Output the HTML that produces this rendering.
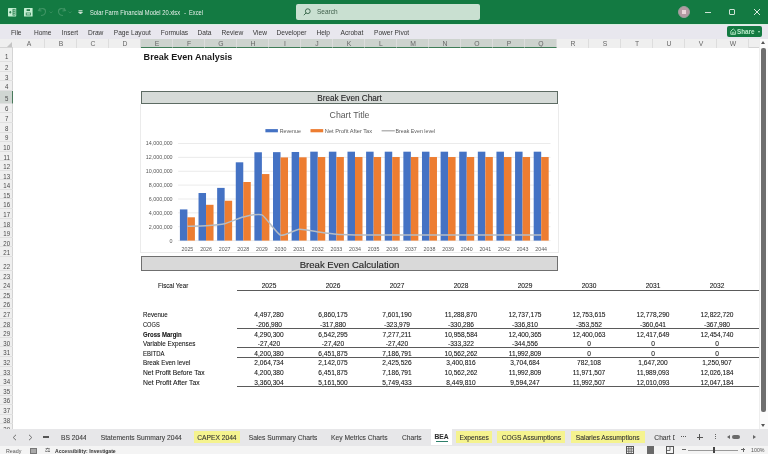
<!DOCTYPE html><html><head><meta charset="utf-8"><style>
*{margin:0;padding:0;box-sizing:border-box}
html,body{width:768px;height:454px;overflow:hidden;background:#fff;font-family:"Liberation Sans", sans-serif;-webkit-font-smoothing:antialiased}
#w{position:absolute;left:0;top:0;width:768px;height:454px;will-change:transform}
.a{position:absolute;white-space:nowrap}
.t{-webkit-text-stroke:0.08px #222}
</style></head><body><div id="w">

<div class="a" style="left:0;top:0;width:768px;height:23.5px;background:#137a42"></div>
<svg class="a" style="left:8px;top:7.5px" width="9" height="9" viewBox="0 0 9 9">
<rect x="0" y="0" width="8.2" height="8.4" rx="0.6" fill="#c4efd2"/>
<rect x="4.6" y="0.9" width="2.8" height="6.6" fill="#1f7a47"/>
<rect x="5.4" y="1.6" width="1.4" height="1.2" fill="#c4efd2"/><rect x="5.4" y="3.6" width="1.4" height="1.2" fill="#c4efd2"/><rect x="5.4" y="5.6" width="1.4" height="1.2" fill="#c4efd2"/>
<ellipse cx="2.3" cy="4.2" rx="0.9" ry="1.3" fill="#2a7d4e"/>
</svg>
<svg class="a" style="left:24px;top:7.5px" width="9" height="9" viewBox="0 0 9 9">
<rect x="0" y="0" width="8.6" height="8.4" rx="0.5" fill="#c4efd2"/>
<rect x="2.6" y="1.2" width="3.4" height="1.8" fill="#2a7d4e"/>
<rect x="1.8" y="4.6" width="5" height="2.8" fill="#2a7d4e"/>
<rect x="2.6" y="5.3" width="3.4" height="1.3" fill="#c4efd2"/>
</svg>
<svg class="a" style="left:37px;top:6px" width="50" height="11" viewBox="0 0 50 11">
<path d="M3 2 L1.5 4.5 L4.5 5 M1.8 4.5 C4 1.5 9 2 8.5 6 C8 8.5 5.5 9.5 4 9.5" fill="none" stroke="#3f9464" stroke-width="1.1"/>
<path d="M12.5 5.5 l1.5 1.5 l1.5 -1.5" fill="none" stroke="#3a8f5f" stroke-width="0.8"/>
<path d="M27 2 L28.5 4.5 L25.5 5 M28.2 4.5 C26 1.5 21 2 21.5 6 C22 8.5 24.5 9.5 26 9.5" fill="none" stroke="#3f9464" stroke-width="1.1"/>
<path d="M31.5 5.5 l1.5 1.5 l1.5 -1.5" fill="none" stroke="#3a8f5f" stroke-width="0.8"/>
<path d="M41.5 4.5 h4 M41.5 6 l2 2 l2 -2 z" fill="#cfe3d6" stroke="#cfe3d6" stroke-width="0.8"/>
</svg>
<div class="a" style="left:90px;top:6.8px;font-size:6.5px;line-height:11px;color:#e6f0ea;transform:scaleX(0.888);transform-origin:left">Solar Farm Financial Model 20.xlsx</div>
<div class="a" style="left:184px;top:6.8px;font-size:6.5px;line-height:11px;color:#e6f0ea">-</div>
<div class="a" style="left:188.5px;top:6.8px;font-size:6.5px;line-height:11px;color:#e6f0ea;transform:scaleX(0.88);transform-origin:left">Excel</div>
<div class="a" style="left:296px;top:4px;width:184px;height:16px;background:#c9e0d1;border-radius:2px"></div>
<svg class="a" style="left:303px;top:8px" width="8" height="8" viewBox="0 0 8 8"><circle cx="4.8" cy="3.2" r="2.4" fill="none" stroke="#2f5e42" stroke-width="0.9"/><line x1="3.1" y1="4.9" x2="0.8" y2="7.2" stroke="#2f5e42" stroke-width="0.9"/></svg>
<div class="a" style="left:317px;top:6px;font-size:6.5px;line-height:12px;color:#40604c">Search</div>
<div class="a" style="left:678px;top:6px;width:12px;height:12px;border-radius:50%;background:#b39aa2;border:1.5px solid #9a9f9c"></div>
<div class="a" style="left:682px;top:10px;width:4px;height:4px;background:#e9d6da"></div>
<div class="a" style="left:705px;top:11.5px;width:6px;height:1px;background:#cfe3d6"></div>
<div class="a" style="left:729px;top:9px;width:6px;height:6px;border:1px solid #cfe3d6;border-radius:1px"></div>
<svg class="a" style="left:753px;top:8px" width="8" height="8" viewBox="0 0 8 8"><path d="M1 1 L7 7 M7 1 L1 7" stroke="#d9eadf" stroke-width="1"/></svg>
<div class="a" style="left:0;top:23.5px;width:768px;height:15.5px;background:#e8e7ee"></div>
<div class="a" style="left:0;top:23.5px;width:768px;height:1.3px;background:#d9efe1"></div>
<div class="a" style="left:10.9px;top:26.6px;font-size:6.6px;line-height:12px;color:#383838">File</div>
<div class="a" style="left:33.9px;top:26.6px;font-size:6.6px;line-height:12px;color:#383838">Home</div>
<div class="a" style="left:61.7px;top:26.6px;font-size:6.6px;line-height:12px;color:#383838">Insert</div>
<div class="a" style="left:88px;top:26.6px;font-size:6.6px;line-height:12px;color:#383838">Draw</div>
<div class="a" style="left:113.8px;top:26.6px;font-size:6.6px;line-height:12px;color:#383838">Page Layout</div>
<div class="a" style="left:160.7px;top:26.6px;font-size:6.6px;line-height:12px;color:#383838">Formulas</div>
<div class="a" style="left:197.6px;top:26.6px;font-size:6.6px;line-height:12px;color:#383838">Data</div>
<div class="a" style="left:221.6px;top:26.6px;font-size:6.6px;line-height:12px;color:#383838">Review</div>
<div class="a" style="left:252.8px;top:26.6px;font-size:6.6px;line-height:12px;color:#383838">View</div>
<div class="a" style="left:276.5px;top:26.6px;font-size:6.6px;line-height:12px;color:#383838">Developer</div>
<div class="a" style="left:316.4px;top:26.6px;font-size:6.6px;line-height:12px;color:#383838">Help</div>
<div class="a" style="left:340.5px;top:26.6px;font-size:6.6px;line-height:12px;color:#383838">Acrobat</div>
<div class="a" style="left:374px;top:26.6px;font-size:6.6px;line-height:12px;color:#383838">Power Pivot</div>
<div class="a" style="left:727px;top:25.5px;width:35px;height:11.5px;background:#137a42;border-radius:2px"></div>
<svg class="a" style="left:729.5px;top:27.8px" width="7" height="7" viewBox="0 0 7 7"><path d="M0.8 3.2 L3.2 0.9 L5.6 3.2 V6.3 H0.8 Z" fill="none" stroke="#b5e6c5" stroke-width="0.9"/><path d="M2.4 6.3 V4.2 H4 V6.3" fill="none" stroke="#b5e6c5" stroke-width="0.7"/></svg>
<div class="a" style="left:737px;top:25.5px;font-size:6.3px;line-height:12px;color:#bdeccd;font-weight:bold">Share</div>
<div class="a" style="left:758px;top:30.5px;width:0;height:0;border-left:1.5px solid transparent;border-right:1.5px solid transparent;border-top:2px solid #b5e6c5"></div>
<div class="a" style="left:0;top:39px;width:768px;height:9.4px;background:#efefef;border-bottom:1px solid #d4d4d4"></div>
<div class="a" style="left:13px;top:39px;width:32px;height:9.4px;background:#efefef;border-right:1px solid #dddddd;"></div>
<div class="a" style="left:13px;top:39px;width:32px;height:9.4px;text-align:center;font-size:6.8px;line-height:9.4px;color:#666">A</div>
<div class="a" style="left:45px;top:39px;width:32px;height:9.4px;background:#efefef;border-right:1px solid #dddddd;"></div>
<div class="a" style="left:45px;top:39px;width:32px;height:9.4px;text-align:center;font-size:6.8px;line-height:9.4px;color:#666">B</div>
<div class="a" style="left:77px;top:39px;width:32px;height:9.4px;background:#efefef;border-right:1px solid #dddddd;"></div>
<div class="a" style="left:77px;top:39px;width:32px;height:9.4px;text-align:center;font-size:6.8px;line-height:9.4px;color:#666">C</div>
<div class="a" style="left:109px;top:39px;width:32px;height:9.4px;background:#efefef;border-right:1px solid #dddddd;"></div>
<div class="a" style="left:109px;top:39px;width:32px;height:9.4px;text-align:center;font-size:6.8px;line-height:9.4px;color:#666">D</div>
<div class="a" style="left:141px;top:39px;width:32px;height:9.4px;background:#cdd3ce;border-right:1px solid #dddddd;border-bottom:1px solid #3f7d57;"></div>
<div class="a" style="left:141px;top:39px;width:32px;height:9.4px;text-align:center;font-size:6.8px;line-height:9.4px;color:#666">E</div>
<div class="a" style="left:173px;top:39px;width:32px;height:9.4px;background:#cdd3ce;border-right:1px solid #dddddd;border-bottom:1px solid #3f7d57;"></div>
<div class="a" style="left:173px;top:39px;width:32px;height:9.4px;text-align:center;font-size:6.8px;line-height:9.4px;color:#666">F</div>
<div class="a" style="left:205px;top:39px;width:32px;height:9.4px;background:#cdd3ce;border-right:1px solid #dddddd;border-bottom:1px solid #3f7d57;"></div>
<div class="a" style="left:205px;top:39px;width:32px;height:9.4px;text-align:center;font-size:6.8px;line-height:9.4px;color:#666">G</div>
<div class="a" style="left:237px;top:39px;width:32px;height:9.4px;background:#cdd3ce;border-right:1px solid #dddddd;border-bottom:1px solid #3f7d57;"></div>
<div class="a" style="left:237px;top:39px;width:32px;height:9.4px;text-align:center;font-size:6.8px;line-height:9.4px;color:#666">H</div>
<div class="a" style="left:269px;top:39px;width:32px;height:9.4px;background:#cdd3ce;border-right:1px solid #dddddd;border-bottom:1px solid #3f7d57;"></div>
<div class="a" style="left:269px;top:39px;width:32px;height:9.4px;text-align:center;font-size:6.8px;line-height:9.4px;color:#666">I</div>
<div class="a" style="left:301px;top:39px;width:32px;height:9.4px;background:#cdd3ce;border-right:1px solid #dddddd;border-bottom:1px solid #3f7d57;"></div>
<div class="a" style="left:301px;top:39px;width:32px;height:9.4px;text-align:center;font-size:6.8px;line-height:9.4px;color:#666">J</div>
<div class="a" style="left:333px;top:39px;width:32px;height:9.4px;background:#cdd3ce;border-right:1px solid #dddddd;border-bottom:1px solid #3f7d57;"></div>
<div class="a" style="left:333px;top:39px;width:32px;height:9.4px;text-align:center;font-size:6.8px;line-height:9.4px;color:#666">K</div>
<div class="a" style="left:365px;top:39px;width:32px;height:9.4px;background:#cdd3ce;border-right:1px solid #dddddd;border-bottom:1px solid #3f7d57;"></div>
<div class="a" style="left:365px;top:39px;width:32px;height:9.4px;text-align:center;font-size:6.8px;line-height:9.4px;color:#666">L</div>
<div class="a" style="left:397px;top:39px;width:32px;height:9.4px;background:#cdd3ce;border-right:1px solid #dddddd;border-bottom:1px solid #3f7d57;"></div>
<div class="a" style="left:397px;top:39px;width:32px;height:9.4px;text-align:center;font-size:6.8px;line-height:9.4px;color:#666">M</div>
<div class="a" style="left:429px;top:39px;width:32px;height:9.4px;background:#cdd3ce;border-right:1px solid #dddddd;border-bottom:1px solid #3f7d57;"></div>
<div class="a" style="left:429px;top:39px;width:32px;height:9.4px;text-align:center;font-size:6.8px;line-height:9.4px;color:#666">N</div>
<div class="a" style="left:461px;top:39px;width:32px;height:9.4px;background:#cdd3ce;border-right:1px solid #dddddd;border-bottom:1px solid #3f7d57;"></div>
<div class="a" style="left:461px;top:39px;width:32px;height:9.4px;text-align:center;font-size:6.8px;line-height:9.4px;color:#666">O</div>
<div class="a" style="left:493px;top:39px;width:32px;height:9.4px;background:#cdd3ce;border-right:1px solid #dddddd;border-bottom:1px solid #3f7d57;"></div>
<div class="a" style="left:493px;top:39px;width:32px;height:9.4px;text-align:center;font-size:6.8px;line-height:9.4px;color:#666">P</div>
<div class="a" style="left:525px;top:39px;width:32px;height:9.4px;background:#cdd3ce;border-right:1px solid #dddddd;border-bottom:1px solid #3f7d57;"></div>
<div class="a" style="left:525px;top:39px;width:32px;height:9.4px;text-align:center;font-size:6.8px;line-height:9.4px;color:#666">Q</div>
<div class="a" style="left:557px;top:39px;width:32px;height:9.4px;background:#efefef;border-right:1px solid #dddddd;"></div>
<div class="a" style="left:557px;top:39px;width:32px;height:9.4px;text-align:center;font-size:6.8px;line-height:9.4px;color:#666">R</div>
<div class="a" style="left:589px;top:39px;width:32px;height:9.4px;background:#efefef;border-right:1px solid #dddddd;"></div>
<div class="a" style="left:589px;top:39px;width:32px;height:9.4px;text-align:center;font-size:6.8px;line-height:9.4px;color:#666">S</div>
<div class="a" style="left:621px;top:39px;width:32px;height:9.4px;background:#efefef;border-right:1px solid #dddddd;"></div>
<div class="a" style="left:621px;top:39px;width:32px;height:9.4px;text-align:center;font-size:6.8px;line-height:9.4px;color:#666">T</div>
<div class="a" style="left:653px;top:39px;width:32px;height:9.4px;background:#efefef;border-right:1px solid #dddddd;"></div>
<div class="a" style="left:653px;top:39px;width:32px;height:9.4px;text-align:center;font-size:6.8px;line-height:9.4px;color:#666">U</div>
<div class="a" style="left:685px;top:39px;width:32px;height:9.4px;background:#efefef;border-right:1px solid #dddddd;"></div>
<div class="a" style="left:685px;top:39px;width:32px;height:9.4px;text-align:center;font-size:6.8px;line-height:9.4px;color:#666">V</div>
<div class="a" style="left:717px;top:39px;width:32px;height:9.4px;background:#efefef;border-right:1px solid #dddddd;"></div>
<div class="a" style="left:717px;top:39px;width:32px;height:9.4px;text-align:center;font-size:6.8px;line-height:9.4px;color:#666">W</div>
<div class="a" style="left:7px;top:41.5px;width:0;height:0;border-left:5px solid transparent;border-bottom:5px solid #c4c4c4"></div>
<div class="a" style="left:0;top:48.4px;width:13px;height:381px;background:#efefef;border-right:1px solid #d4d4d4"></div>
<div class="a" style="left:0;top:48.40px;width:13px;height:13.80px;border-bottom:1px solid #e0e0e0"></div>
<div class="a" style="left:0;top:52.30px;width:13.5px;text-align:center;font-size:7.1px;line-height:10px;color:#4a4a4a;transform:scaleX(0.86)">1</div>
<div class="a" style="left:0;top:62.20px;width:13px;height:9.70px;border-bottom:1px solid #e0e0e0"></div>
<div class="a" style="left:0;top:63.20px;width:13.5px;text-align:center;font-size:7.1px;line-height:10px;color:#4a4a4a;transform:scaleX(0.86)">2</div>
<div class="a" style="left:0;top:71.90px;width:13px;height:9.60px;border-bottom:1px solid #e0e0e0"></div>
<div class="a" style="left:0;top:72.80px;width:13.5px;text-align:center;font-size:7.1px;line-height:10px;color:#4a4a4a;transform:scaleX(0.86)">3</div>
<div class="a" style="left:0;top:81.50px;width:13px;height:9.60px;border-bottom:1px solid #e0e0e0"></div>
<div class="a" style="left:0;top:82.40px;width:13.5px;text-align:center;font-size:7.1px;line-height:10px;color:#4a4a4a;transform:scaleX(0.86)">4</div>
<div class="a" style="left:0;top:91.10px;width:13px;height:12.70px;background:#d0d6d2;border-right:1.5px solid #4a7a5c;border-bottom:1px solid #e0e0e0"></div>
<div class="a" style="left:0;top:93.50px;width:13.5px;text-align:center;font-size:7.1px;line-height:10px;color:#4a4a4a;transform:scaleX(0.86)">5</div>
<div class="a" style="left:0;top:103.80px;width:13px;height:9.57px;border-bottom:1px solid #e0e0e0"></div>
<div class="a" style="left:0;top:104.17px;width:13.5px;text-align:center;font-size:7.1px;line-height:10px;color:#4a4a4a;transform:scaleX(0.86)">6</div>
<div class="a" style="left:0;top:113.37px;width:13px;height:9.57px;border-bottom:1px solid #e0e0e0"></div>
<div class="a" style="left:0;top:114.24px;width:13.5px;text-align:center;font-size:7.1px;line-height:10px;color:#4a4a4a;transform:scaleX(0.86)">7</div>
<div class="a" style="left:0;top:122.94px;width:13px;height:9.57px;border-bottom:1px solid #e0e0e0"></div>
<div class="a" style="left:0;top:123.81px;width:13.5px;text-align:center;font-size:7.1px;line-height:10px;color:#4a4a4a;transform:scaleX(0.86)">8</div>
<div class="a" style="left:0;top:132.51px;width:13px;height:9.57px;border-bottom:1px solid #e0e0e0"></div>
<div class="a" style="left:0;top:133.38px;width:13.5px;text-align:center;font-size:7.1px;line-height:10px;color:#4a4a4a;transform:scaleX(0.86)">9</div>
<div class="a" style="left:0;top:142.08px;width:13px;height:9.57px;border-bottom:1px solid #e0e0e0"></div>
<div class="a" style="left:0;top:142.95px;width:13.5px;text-align:center;font-size:7.1px;line-height:10px;color:#4a4a4a;transform:scaleX(0.86)">10</div>
<div class="a" style="left:0;top:151.65px;width:13px;height:9.57px;border-bottom:1px solid #e0e0e0"></div>
<div class="a" style="left:0;top:152.52px;width:13.5px;text-align:center;font-size:7.1px;line-height:10px;color:#4a4a4a;transform:scaleX(0.86)">11</div>
<div class="a" style="left:0;top:161.22px;width:13px;height:9.57px;border-bottom:1px solid #e0e0e0"></div>
<div class="a" style="left:0;top:162.09px;width:13.5px;text-align:center;font-size:7.1px;line-height:10px;color:#4a4a4a;transform:scaleX(0.86)">12</div>
<div class="a" style="left:0;top:170.79px;width:13px;height:9.57px;border-bottom:1px solid #e0e0e0"></div>
<div class="a" style="left:0;top:171.66px;width:13.5px;text-align:center;font-size:7.1px;line-height:10px;color:#4a4a4a;transform:scaleX(0.86)">13</div>
<div class="a" style="left:0;top:180.36px;width:13px;height:9.57px;border-bottom:1px solid #e0e0e0"></div>
<div class="a" style="left:0;top:181.23px;width:13.5px;text-align:center;font-size:7.1px;line-height:10px;color:#4a4a4a;transform:scaleX(0.86)">14</div>
<div class="a" style="left:0;top:189.93px;width:13px;height:9.57px;border-bottom:1px solid #e0e0e0"></div>
<div class="a" style="left:0;top:190.80px;width:13.5px;text-align:center;font-size:7.1px;line-height:10px;color:#4a4a4a;transform:scaleX(0.86)">15</div>
<div class="a" style="left:0;top:199.50px;width:13px;height:9.57px;border-bottom:1px solid #e0e0e0"></div>
<div class="a" style="left:0;top:200.37px;width:13.5px;text-align:center;font-size:7.1px;line-height:10px;color:#4a4a4a;transform:scaleX(0.86)">16</div>
<div class="a" style="left:0;top:209.07px;width:13px;height:9.57px;border-bottom:1px solid #e0e0e0"></div>
<div class="a" style="left:0;top:209.94px;width:13.5px;text-align:center;font-size:7.1px;line-height:10px;color:#4a4a4a;transform:scaleX(0.86)">17</div>
<div class="a" style="left:0;top:218.64px;width:13px;height:9.57px;border-bottom:1px solid #e0e0e0"></div>
<div class="a" style="left:0;top:219.51px;width:13.5px;text-align:center;font-size:7.1px;line-height:10px;color:#4a4a4a;transform:scaleX(0.86)">18</div>
<div class="a" style="left:0;top:228.21px;width:13px;height:9.57px;border-bottom:1px solid #e0e0e0"></div>
<div class="a" style="left:0;top:229.08px;width:13.5px;text-align:center;font-size:7.1px;line-height:10px;color:#4a4a4a;transform:scaleX(0.86)">19</div>
<div class="a" style="left:0;top:237.78px;width:13px;height:9.57px;border-bottom:1px solid #e0e0e0"></div>
<div class="a" style="left:0;top:238.65px;width:13.5px;text-align:center;font-size:7.1px;line-height:10px;color:#4a4a4a;transform:scaleX(0.86)">20</div>
<div class="a" style="left:0;top:247.35px;width:13px;height:9.57px;border-bottom:1px solid #e0e0e0"></div>
<div class="a" style="left:0;top:248.22px;width:13.5px;text-align:center;font-size:7.1px;line-height:10px;color:#4a4a4a;transform:scaleX(0.86)">21</div>
<div class="a" style="left:0;top:256.92px;width:13px;height:13.68px;border-bottom:1px solid #e0e0e0"></div>
<div class="a" style="left:0;top:261.90px;width:13.5px;text-align:center;font-size:7.1px;line-height:10px;color:#4a4a4a;transform:scaleX(0.86)">22</div>
<div class="a" style="left:0;top:270.60px;width:13px;height:9.61px;border-bottom:1px solid #e0e0e0"></div>
<div class="a" style="left:0;top:271.51px;width:13.5px;text-align:center;font-size:7.1px;line-height:10px;color:#4a4a4a;transform:scaleX(0.86)">23</div>
<div class="a" style="left:0;top:280.21px;width:13px;height:9.61px;border-bottom:1px solid #e0e0e0"></div>
<div class="a" style="left:0;top:281.12px;width:13.5px;text-align:center;font-size:7.1px;line-height:10px;color:#4a4a4a;transform:scaleX(0.86)">24</div>
<div class="a" style="left:0;top:289.82px;width:13px;height:9.61px;border-bottom:1px solid #e0e0e0"></div>
<div class="a" style="left:0;top:290.73px;width:13.5px;text-align:center;font-size:7.1px;line-height:10px;color:#4a4a4a;transform:scaleX(0.86)">25</div>
<div class="a" style="left:0;top:299.43px;width:13px;height:9.61px;border-bottom:1px solid #e0e0e0"></div>
<div class="a" style="left:0;top:300.34px;width:13.5px;text-align:center;font-size:7.1px;line-height:10px;color:#4a4a4a;transform:scaleX(0.86)">26</div>
<div class="a" style="left:0;top:309.04px;width:13px;height:9.61px;border-bottom:1px solid #e0e0e0"></div>
<div class="a" style="left:0;top:309.95px;width:13.5px;text-align:center;font-size:7.1px;line-height:10px;color:#4a4a4a;transform:scaleX(0.86)">27</div>
<div class="a" style="left:0;top:318.65px;width:13px;height:9.61px;border-bottom:1px solid #e0e0e0"></div>
<div class="a" style="left:0;top:319.56px;width:13.5px;text-align:center;font-size:7.1px;line-height:10px;color:#4a4a4a;transform:scaleX(0.86)">28</div>
<div class="a" style="left:0;top:328.26px;width:13px;height:9.61px;border-bottom:1px solid #e0e0e0"></div>
<div class="a" style="left:0;top:329.17px;width:13.5px;text-align:center;font-size:7.1px;line-height:10px;color:#4a4a4a;transform:scaleX(0.86)">29</div>
<div class="a" style="left:0;top:337.87px;width:13px;height:9.61px;border-bottom:1px solid #e0e0e0"></div>
<div class="a" style="left:0;top:338.78px;width:13.5px;text-align:center;font-size:7.1px;line-height:10px;color:#4a4a4a;transform:scaleX(0.86)">30</div>
<div class="a" style="left:0;top:347.48px;width:13px;height:9.61px;border-bottom:1px solid #e0e0e0"></div>
<div class="a" style="left:0;top:348.39px;width:13.5px;text-align:center;font-size:7.1px;line-height:10px;color:#4a4a4a;transform:scaleX(0.86)">31</div>
<div class="a" style="left:0;top:357.09px;width:13px;height:9.61px;border-bottom:1px solid #e0e0e0"></div>
<div class="a" style="left:0;top:358.00px;width:13.5px;text-align:center;font-size:7.1px;line-height:10px;color:#4a4a4a;transform:scaleX(0.86)">32</div>
<div class="a" style="left:0;top:366.70px;width:13px;height:9.61px;border-bottom:1px solid #e0e0e0"></div>
<div class="a" style="left:0;top:367.61px;width:13.5px;text-align:center;font-size:7.1px;line-height:10px;color:#4a4a4a;transform:scaleX(0.86)">33</div>
<div class="a" style="left:0;top:376.31px;width:13px;height:9.61px;border-bottom:1px solid #e0e0e0"></div>
<div class="a" style="left:0;top:377.22px;width:13.5px;text-align:center;font-size:7.1px;line-height:10px;color:#4a4a4a;transform:scaleX(0.86)">34</div>
<div class="a" style="left:0;top:385.92px;width:13px;height:9.61px;border-bottom:1px solid #e0e0e0"></div>
<div class="a" style="left:0;top:386.83px;width:13.5px;text-align:center;font-size:7.1px;line-height:10px;color:#4a4a4a;transform:scaleX(0.86)">35</div>
<div class="a" style="left:0;top:395.53px;width:13px;height:9.61px;border-bottom:1px solid #e0e0e0"></div>
<div class="a" style="left:0;top:396.44px;width:13.5px;text-align:center;font-size:7.1px;line-height:10px;color:#4a4a4a;transform:scaleX(0.86)">36</div>
<div class="a" style="left:0;top:405.14px;width:13px;height:9.61px;border-bottom:1px solid #e0e0e0"></div>
<div class="a" style="left:0;top:406.05px;width:13.5px;text-align:center;font-size:7.1px;line-height:10px;color:#4a4a4a;transform:scaleX(0.86)">37</div>
<div class="a" style="left:0;top:414.75px;width:13px;height:9.61px;border-bottom:1px solid #e0e0e0"></div>
<div class="a" style="left:0;top:415.66px;width:13.5px;text-align:center;font-size:7.1px;line-height:10px;color:#4a4a4a;transform:scaleX(0.86)">38</div>
<div class="a" style="left:0;top:424.36px;width:13px;height:9.61px;border-bottom:1px solid #e0e0e0"></div>
<div class="a" style="left:0;top:425.27px;width:13.5px;text-align:center;font-size:7.1px;line-height:10px;color:#4a4a4a;transform:scaleX(0.86)">39</div>
<div class="a" style="left:143.6px;top:50.6px;font-size:9.05px;line-height:12px;font-weight:bold;color:#1a1a1a">Break Even Analysis</div>
<div class="a" style="left:141px;top:91.1px;width:417px;height:12.9px;background:#d6dbd8;border:1px solid #5d6b63"></div>
<div class="a" style="left:141px;top:91.8px;width:417px;height:13px;text-align:center;-webkit-text-stroke:0.12px #262626;font-size:8.2px;line-height:13px;color:#262626">Break Even Chart</div>
<div class="a" style="left:140px;top:104px;width:418.5px;height:149px;border:1px solid #ebebeb;border-top:none"></div>
<svg class="a" style="left:0;top:0" width="768" height="454" viewBox="0 0 768 454">
<text x="349.5" y="117.8" text-anchor="middle" font-family="Liberation Sans" font-size="8.75" fill="#595959">Chart Title</text>
<rect x="265.4" y="129.1" width="12.5" height="3.2" fill="#4472c4"/>
<text x="279.7" y="132.6" font-family="Liberation Sans" font-size="5.3" fill="#595959">Revenue</text>
<rect x="310.5" y="129.1" width="12.7" height="3.2" fill="#ed7d31"/>
<text x="324.8" y="132.6" font-family="Liberation Sans" font-size="5.7" fill="#595959">Net Profit After Tax</text>
<rect x="381.6" y="130.2" width="13.2" height="1.2" fill="#a5a5a5"/>
<text x="395.6" y="132.6" font-family="Liberation Sans" font-size="5.28" fill="#595959">Break Even level</text>
<line x1="178.1" y1="240.60" x2="550.50" y2="240.60" stroke="#e6e6e6" stroke-width="0.8"/>
<text x="172.6" y="242.50" text-anchor="end" font-family="Liberation Sans" font-size="5.37" fill="#595959">0</text>
<line x1="178.1" y1="226.73" x2="550.50" y2="226.73" stroke="#e6e6e6" stroke-width="0.8"/>
<text x="172.6" y="228.63" text-anchor="end" font-family="Liberation Sans" font-size="5.37" fill="#595959">2,000,000</text>
<line x1="178.1" y1="212.86" x2="550.50" y2="212.86" stroke="#e6e6e6" stroke-width="0.8"/>
<text x="172.6" y="214.76" text-anchor="end" font-family="Liberation Sans" font-size="5.37" fill="#595959">4,000,000</text>
<line x1="178.1" y1="198.99" x2="550.50" y2="198.99" stroke="#e6e6e6" stroke-width="0.8"/>
<text x="172.6" y="200.89" text-anchor="end" font-family="Liberation Sans" font-size="5.37" fill="#595959">6,000,000</text>
<line x1="178.1" y1="185.12" x2="550.50" y2="185.12" stroke="#e6e6e6" stroke-width="0.8"/>
<text x="172.6" y="187.02" text-anchor="end" font-family="Liberation Sans" font-size="5.37" fill="#595959">8,000,000</text>
<line x1="178.1" y1="171.25" x2="550.50" y2="171.25" stroke="#e6e6e6" stroke-width="0.8"/>
<text x="172.6" y="173.15" text-anchor="end" font-family="Liberation Sans" font-size="5.37" fill="#595959">10,000,000</text>
<line x1="178.1" y1="157.38" x2="550.50" y2="157.38" stroke="#e6e6e6" stroke-width="0.8"/>
<text x="172.6" y="159.28" text-anchor="end" font-family="Liberation Sans" font-size="5.37" fill="#595959">12,000,000</text>
<line x1="178.1" y1="143.51" x2="550.50" y2="143.51" stroke="#e6e6e6" stroke-width="0.8"/>
<text x="172.6" y="145.41" text-anchor="end" font-family="Liberation Sans" font-size="5.37" fill="#595959">14,000,000</text>
<rect x="179.91" y="209.41" width="7.5" height="31.19" fill="#4472c4"/>
<rect x="187.41" y="217.30" width="7.5" height="23.30" fill="#ed7d31"/>
<text x="187.41" y="250.9" text-anchor="middle" font-family="Liberation Sans" font-size="5.3" fill="#595959">2025</text>
<rect x="198.53" y="193.02" width="7.5" height="47.58" fill="#4472c4"/>
<rect x="206.03" y="204.80" width="7.5" height="35.80" fill="#ed7d31"/>
<text x="206.03" y="250.9" text-anchor="middle" font-family="Liberation Sans" font-size="5.3" fill="#595959">2026</text>
<rect x="217.15" y="187.89" width="7.5" height="52.71" fill="#4472c4"/>
<rect x="224.65" y="200.73" width="7.5" height="39.87" fill="#ed7d31"/>
<text x="224.65" y="250.9" text-anchor="middle" font-family="Liberation Sans" font-size="5.3" fill="#595959">2027</text>
<rect x="235.77" y="162.31" width="7.5" height="78.29" fill="#4472c4"/>
<rect x="243.27" y="182.00" width="7.5" height="58.60" fill="#ed7d31"/>
<text x="243.27" y="250.9" text-anchor="middle" font-family="Liberation Sans" font-size="5.3" fill="#595959">2028</text>
<rect x="254.39" y="152.27" width="7.5" height="88.33" fill="#4472c4"/>
<rect x="261.89" y="174.06" width="7.5" height="66.54" fill="#ed7d31"/>
<text x="261.89" y="250.9" text-anchor="middle" font-family="Liberation Sans" font-size="5.3" fill="#595959">2029</text>
<rect x="273.01" y="152.15" width="7.5" height="88.45" fill="#4472c4"/>
<rect x="280.51" y="157.43" width="7.5" height="83.17" fill="#ed7d31"/>
<text x="280.51" y="250.9" text-anchor="middle" font-family="Liberation Sans" font-size="5.3" fill="#595959">2030</text>
<rect x="291.63" y="151.98" width="7.5" height="88.62" fill="#4472c4"/>
<rect x="299.13" y="157.31" width="7.5" height="83.29" fill="#ed7d31"/>
<text x="299.13" y="250.9" text-anchor="middle" font-family="Liberation Sans" font-size="5.3" fill="#595959">2031</text>
<rect x="310.25" y="151.67" width="7.5" height="88.93" fill="#4472c4"/>
<rect x="317.75" y="157.05" width="7.5" height="83.55" fill="#ed7d31"/>
<text x="317.75" y="250.9" text-anchor="middle" font-family="Liberation Sans" font-size="5.3" fill="#595959">2032</text>
<rect x="328.87" y="151.69" width="7.5" height="88.91" fill="#4472c4"/>
<rect x="336.37" y="157.03" width="7.5" height="83.57" fill="#ed7d31"/>
<text x="336.37" y="250.9" text-anchor="middle" font-family="Liberation Sans" font-size="5.3" fill="#595959">2033</text>
<rect x="347.49" y="151.69" width="7.5" height="88.91" fill="#4472c4"/>
<rect x="354.99" y="157.03" width="7.5" height="83.57" fill="#ed7d31"/>
<text x="354.99" y="250.9" text-anchor="middle" font-family="Liberation Sans" font-size="5.3" fill="#595959">2034</text>
<rect x="366.11" y="151.69" width="7.5" height="88.91" fill="#4472c4"/>
<rect x="373.61" y="157.03" width="7.5" height="83.57" fill="#ed7d31"/>
<text x="373.61" y="250.9" text-anchor="middle" font-family="Liberation Sans" font-size="5.3" fill="#595959">2035</text>
<rect x="384.73" y="151.69" width="7.5" height="88.91" fill="#4472c4"/>
<rect x="392.23" y="157.03" width="7.5" height="83.57" fill="#ed7d31"/>
<text x="392.23" y="250.9" text-anchor="middle" font-family="Liberation Sans" font-size="5.3" fill="#595959">2036</text>
<rect x="403.35" y="151.69" width="7.5" height="88.91" fill="#4472c4"/>
<rect x="410.85" y="157.03" width="7.5" height="83.57" fill="#ed7d31"/>
<text x="410.85" y="250.9" text-anchor="middle" font-family="Liberation Sans" font-size="5.3" fill="#595959">2037</text>
<rect x="421.97" y="151.69" width="7.5" height="88.91" fill="#4472c4"/>
<rect x="429.47" y="157.03" width="7.5" height="83.57" fill="#ed7d31"/>
<text x="429.47" y="250.9" text-anchor="middle" font-family="Liberation Sans" font-size="5.3" fill="#595959">2038</text>
<rect x="440.59" y="151.69" width="7.5" height="88.91" fill="#4472c4"/>
<rect x="448.09" y="157.03" width="7.5" height="83.57" fill="#ed7d31"/>
<text x="448.09" y="250.9" text-anchor="middle" font-family="Liberation Sans" font-size="5.3" fill="#595959">2039</text>
<rect x="459.21" y="151.69" width="7.5" height="88.91" fill="#4472c4"/>
<rect x="466.71" y="157.03" width="7.5" height="83.57" fill="#ed7d31"/>
<text x="466.71" y="250.9" text-anchor="middle" font-family="Liberation Sans" font-size="5.3" fill="#595959">2040</text>
<rect x="477.83" y="151.69" width="7.5" height="88.91" fill="#4472c4"/>
<rect x="485.33" y="157.03" width="7.5" height="83.57" fill="#ed7d31"/>
<text x="485.33" y="250.9" text-anchor="middle" font-family="Liberation Sans" font-size="5.3" fill="#595959">2041</text>
<rect x="496.45" y="151.69" width="7.5" height="88.91" fill="#4472c4"/>
<rect x="503.95" y="157.03" width="7.5" height="83.57" fill="#ed7d31"/>
<text x="503.95" y="250.9" text-anchor="middle" font-family="Liberation Sans" font-size="5.3" fill="#595959">2042</text>
<rect x="515.07" y="151.69" width="7.5" height="88.91" fill="#4472c4"/>
<rect x="522.57" y="157.03" width="7.5" height="83.57" fill="#ed7d31"/>
<text x="522.57" y="250.9" text-anchor="middle" font-family="Liberation Sans" font-size="5.3" fill="#595959">2043</text>
<rect x="533.69" y="151.69" width="7.5" height="88.91" fill="#4472c4"/>
<rect x="541.19" y="157.03" width="7.5" height="83.57" fill="#ed7d31"/>
<text x="541.19" y="250.9" text-anchor="middle" font-family="Liberation Sans" font-size="5.3" fill="#595959">2044</text>
<path d="M187.41 226.28 C189.09 226.23 202.68 225.97 206.03 225.74 C209.38 225.52 221.30 224.56 224.65 223.78 C228.00 222.99 239.92 217.81 243.27 217.02 C246.62 216.22 258.54 213.27 261.89 214.91 C265.24 216.54 277.16 233.89 280.51 235.18 C283.86 236.46 295.78 229.47 299.13 229.18 C302.48 228.88 314.40 231.46 317.75 231.92 C321.10 232.39 333.02 234.09 336.37 234.36 C339.72 234.63 351.64 234.85 354.99 234.91 C358.34 234.98 370.26 235.04 373.61 235.05 C376.96 235.06 388.88 235.05 392.23 235.05 C395.58 235.05 407.50 235.05 410.85 235.05 C414.20 235.05 426.12 235.05 429.47 235.05 C432.82 235.05 444.74 235.05 448.09 235.05 C451.44 235.05 463.36 235.05 466.71 235.05 C470.06 235.05 481.98 235.05 485.33 235.05 C488.68 235.05 500.60 235.05 503.95 235.05 C507.30 235.05 519.22 235.05 522.57 235.05 C525.92 235.05 539.51 235.05 541.19 235.05" fill="none" stroke="#b5bcc4" stroke-width="1.5"/>
</svg>
<div class="a" style="left:141px;top:256.4px;width:417px;height:14.8px;background:#d9d9d9;border:1px solid #6f6f6f"></div>
<div class="a" style="left:141px;top:257.6px;width:417px;height:14.2px;text-align:center;-webkit-text-stroke:0.12px #262626;font-size:9.6px;line-height:14px;color:#262626">Break Even Calculation</div>
<div class="a t" style="left:158.4px;top:280.53px;font-size:6.6px;line-height:10px;color:#111;transform:scaleX(0.94);transform-origin:left">Fiscal Year</div>
<div class="a t" style="left:237px;top:280.53px;width:64px;text-align:center;font-size:6.6px;line-height:10px;color:#111">2025</div>
<div class="a t" style="left:301px;top:280.53px;width:64px;text-align:center;font-size:6.6px;line-height:10px;color:#111">2026</div>
<div class="a t" style="left:365px;top:280.53px;width:64px;text-align:center;font-size:6.6px;line-height:10px;color:#111">2027</div>
<div class="a t" style="left:429px;top:280.53px;width:64px;text-align:center;font-size:6.6px;line-height:10px;color:#111">2028</div>
<div class="a t" style="left:493px;top:280.53px;width:64px;text-align:center;font-size:6.6px;line-height:10px;color:#111">2029</div>
<div class="a t" style="left:557px;top:280.53px;width:64px;text-align:center;font-size:6.6px;line-height:10px;color:#111">2030</div>
<div class="a t" style="left:621px;top:280.53px;width:64px;text-align:center;font-size:6.6px;line-height:10px;color:#111">2031</div>
<div class="a t" style="left:685px;top:280.53px;width:64px;text-align:center;font-size:6.6px;line-height:10px;color:#111">2032</div>
<div class="a t" style="left:143px;top:310.36px;font-size:6.6px;line-height:10px;color:#111;transform:scaleX(0.935);transform-origin:left;">Revenue</div>
<div class="a t" style="left:237px;top:310.36px;width:64px;text-align:center;font-size:6.6px;line-height:10px;color:#111">4,497,280</div>
<div class="a t" style="left:301px;top:310.36px;width:64px;text-align:center;font-size:6.6px;line-height:10px;color:#111">6,860,175</div>
<div class="a t" style="left:365px;top:310.36px;width:64px;text-align:center;font-size:6.6px;line-height:10px;color:#111">7,601,190</div>
<div class="a t" style="left:429px;top:310.36px;width:64px;text-align:center;font-size:6.6px;line-height:10px;color:#111">11,288,870</div>
<div class="a t" style="left:493px;top:310.36px;width:64px;text-align:center;font-size:6.6px;line-height:10px;color:#111">12,737,175</div>
<div class="a t" style="left:557px;top:310.36px;width:64px;text-align:center;font-size:6.6px;line-height:10px;color:#111">12,753,615</div>
<div class="a t" style="left:621px;top:310.36px;width:64px;text-align:center;font-size:6.6px;line-height:10px;color:#111">12,778,290</div>
<div class="a t" style="left:685px;top:310.36px;width:64px;text-align:center;font-size:6.6px;line-height:10px;color:#111">12,822,720</div>
<div class="a t" style="left:143px;top:319.97px;font-size:6.6px;line-height:10px;color:#111;transform:scaleX(0.86);transform-origin:left;">COGS</div>
<div class="a t" style="left:237px;top:319.97px;width:64px;text-align:center;font-size:6.6px;line-height:10px;color:#111">-206,980</div>
<div class="a t" style="left:301px;top:319.97px;width:64px;text-align:center;font-size:6.6px;line-height:10px;color:#111">-317,880</div>
<div class="a t" style="left:365px;top:319.97px;width:64px;text-align:center;font-size:6.6px;line-height:10px;color:#111">-323,979</div>
<div class="a t" style="left:429px;top:319.97px;width:64px;text-align:center;font-size:6.6px;line-height:10px;color:#111">-330,286</div>
<div class="a t" style="left:493px;top:319.97px;width:64px;text-align:center;font-size:6.6px;line-height:10px;color:#111">-336,810</div>
<div class="a t" style="left:557px;top:319.97px;width:64px;text-align:center;font-size:6.6px;line-height:10px;color:#111">-353,552</div>
<div class="a t" style="left:621px;top:319.97px;width:64px;text-align:center;font-size:6.6px;line-height:10px;color:#111">-360,641</div>
<div class="a t" style="left:685px;top:319.97px;width:64px;text-align:center;font-size:6.6px;line-height:10px;color:#111">-367,980</div>
<div class="a t" style="left:143px;top:329.58px;font-size:6.6px;line-height:10px;color:#111;transform:scaleX(0.91);transform-origin:left;font-weight:bold;">Gross Margin</div>
<div class="a t" style="left:237px;top:329.58px;width:64px;text-align:center;font-size:6.6px;line-height:10px;color:#111">4,290,300</div>
<div class="a t" style="left:301px;top:329.58px;width:64px;text-align:center;font-size:6.6px;line-height:10px;color:#111">6,542,295</div>
<div class="a t" style="left:365px;top:329.58px;width:64px;text-align:center;font-size:6.6px;line-height:10px;color:#111">7,277,211</div>
<div class="a t" style="left:429px;top:329.58px;width:64px;text-align:center;font-size:6.6px;line-height:10px;color:#111">10,958,584</div>
<div class="a t" style="left:493px;top:329.58px;width:64px;text-align:center;font-size:6.6px;line-height:10px;color:#111">12,400,365</div>
<div class="a t" style="left:557px;top:329.58px;width:64px;text-align:center;font-size:6.6px;line-height:10px;color:#111">12,400,063</div>
<div class="a t" style="left:621px;top:329.58px;width:64px;text-align:center;font-size:6.6px;line-height:10px;color:#111">12,417,649</div>
<div class="a t" style="left:685px;top:329.58px;width:64px;text-align:center;font-size:6.6px;line-height:10px;color:#111">12,454,740</div>
<div class="a t" style="left:143px;top:339.19px;font-size:6.6px;line-height:10px;color:#111;transform:scaleX(0.96);transform-origin:left;">Variable Expenses</div>
<div class="a t" style="left:237px;top:339.19px;width:64px;text-align:center;font-size:6.6px;line-height:10px;color:#111">-27,420</div>
<div class="a t" style="left:301px;top:339.19px;width:64px;text-align:center;font-size:6.6px;line-height:10px;color:#111">-27,420</div>
<div class="a t" style="left:365px;top:339.19px;width:64px;text-align:center;font-size:6.6px;line-height:10px;color:#111">-27,420</div>
<div class="a t" style="left:429px;top:339.19px;width:64px;text-align:center;font-size:6.6px;line-height:10px;color:#111">-333,322</div>
<div class="a t" style="left:493px;top:339.19px;width:64px;text-align:center;font-size:6.6px;line-height:10px;color:#111">-344,556</div>
<div class="a t" style="left:557px;top:339.19px;width:64px;text-align:center;font-size:6.6px;line-height:10px;color:#111">0</div>
<div class="a t" style="left:621px;top:339.19px;width:64px;text-align:center;font-size:6.6px;line-height:10px;color:#111">0</div>
<div class="a t" style="left:685px;top:339.19px;width:64px;text-align:center;font-size:6.6px;line-height:10px;color:#111">0</div>
<div class="a t" style="left:143px;top:348.80px;font-size:6.6px;line-height:10px;color:#111;transform:scaleX(0.9);transform-origin:left;">EBITDA</div>
<div class="a t" style="left:237px;top:348.80px;width:64px;text-align:center;font-size:6.6px;line-height:10px;color:#111">4,200,380</div>
<div class="a t" style="left:301px;top:348.80px;width:64px;text-align:center;font-size:6.6px;line-height:10px;color:#111">6,451,875</div>
<div class="a t" style="left:365px;top:348.80px;width:64px;text-align:center;font-size:6.6px;line-height:10px;color:#111">7,186,791</div>
<div class="a t" style="left:429px;top:348.80px;width:64px;text-align:center;font-size:6.6px;line-height:10px;color:#111">10,562,262</div>
<div class="a t" style="left:493px;top:348.80px;width:64px;text-align:center;font-size:6.6px;line-height:10px;color:#111">11,992,809</div>
<div class="a t" style="left:557px;top:348.80px;width:64px;text-align:center;font-size:6.6px;line-height:10px;color:#111">0</div>
<div class="a t" style="left:621px;top:348.80px;width:64px;text-align:center;font-size:6.6px;line-height:10px;color:#111">0</div>
<div class="a t" style="left:685px;top:348.80px;width:64px;text-align:center;font-size:6.6px;line-height:10px;color:#111">0</div>
<div class="a t" style="left:143px;top:358.41px;font-size:6.6px;line-height:10px;color:#111;transform:scaleX(0.957);transform-origin:left;">Break Even level</div>
<div class="a t" style="left:237px;top:358.41px;width:64px;text-align:center;font-size:6.6px;line-height:10px;color:#111">2,064,734</div>
<div class="a t" style="left:301px;top:358.41px;width:64px;text-align:center;font-size:6.6px;line-height:10px;color:#111">2,142,075</div>
<div class="a t" style="left:365px;top:358.41px;width:64px;text-align:center;font-size:6.6px;line-height:10px;color:#111">2,425,526</div>
<div class="a t" style="left:429px;top:358.41px;width:64px;text-align:center;font-size:6.6px;line-height:10px;color:#111">3,400,816</div>
<div class="a t" style="left:493px;top:358.41px;width:64px;text-align:center;font-size:6.6px;line-height:10px;color:#111">3,704,684</div>
<div class="a t" style="left:557px;top:358.41px;width:64px;text-align:center;font-size:6.6px;line-height:10px;color:#111">782,108</div>
<div class="a t" style="left:621px;top:358.41px;width:64px;text-align:center;font-size:6.6px;line-height:10px;color:#111">1,647,200</div>
<div class="a t" style="left:685px;top:358.41px;width:64px;text-align:center;font-size:6.6px;line-height:10px;color:#111">1,250,907</div>
<div class="a t" style="left:143px;top:368.02px;font-size:6.6px;line-height:10px;color:#111;transform:scaleX(1.015);transform-origin:left;">Net Profit Before Tax</div>
<div class="a t" style="left:237px;top:368.02px;width:64px;text-align:center;font-size:6.6px;line-height:10px;color:#111">4,200,380</div>
<div class="a t" style="left:301px;top:368.02px;width:64px;text-align:center;font-size:6.6px;line-height:10px;color:#111">6,451,875</div>
<div class="a t" style="left:365px;top:368.02px;width:64px;text-align:center;font-size:6.6px;line-height:10px;color:#111">7,186,791</div>
<div class="a t" style="left:429px;top:368.02px;width:64px;text-align:center;font-size:6.6px;line-height:10px;color:#111">10,562,262</div>
<div class="a t" style="left:493px;top:368.02px;width:64px;text-align:center;font-size:6.6px;line-height:10px;color:#111">11,992,809</div>
<div class="a t" style="left:557px;top:368.02px;width:64px;text-align:center;font-size:6.6px;line-height:10px;color:#111">11,971,507</div>
<div class="a t" style="left:621px;top:368.02px;width:64px;text-align:center;font-size:6.6px;line-height:10px;color:#111">11,989,093</div>
<div class="a t" style="left:685px;top:368.02px;width:64px;text-align:center;font-size:6.6px;line-height:10px;color:#111">12,026,184</div>
<div class="a t" style="left:143px;top:377.63px;font-size:6.6px;line-height:10px;color:#111;transform:scaleX(1.033);transform-origin:left;">Net Profit After Tax</div>
<div class="a t" style="left:237px;top:377.63px;width:64px;text-align:center;font-size:6.6px;line-height:10px;color:#111">3,360,304</div>
<div class="a t" style="left:301px;top:377.63px;width:64px;text-align:center;font-size:6.6px;line-height:10px;color:#111">5,161,500</div>
<div class="a t" style="left:365px;top:377.63px;width:64px;text-align:center;font-size:6.6px;line-height:10px;color:#111">5,749,433</div>
<div class="a t" style="left:429px;top:377.63px;width:64px;text-align:center;font-size:6.6px;line-height:10px;color:#111">8,449,810</div>
<div class="a t" style="left:493px;top:377.63px;width:64px;text-align:center;font-size:6.6px;line-height:10px;color:#111">9,594,247</div>
<div class="a t" style="left:557px;top:377.63px;width:64px;text-align:center;font-size:6.6px;line-height:10px;color:#111">11,992,507</div>
<div class="a t" style="left:621px;top:377.63px;width:64px;text-align:center;font-size:6.6px;line-height:10px;color:#111">12,010,093</div>
<div class="a t" style="left:685px;top:377.63px;width:64px;text-align:center;font-size:6.6px;line-height:10px;color:#111">12,047,184</div>
<div class="a" style="left:237px;top:289.6px;width:522px;height:1px;background:#5a5a5a"></div>
<div class="a" style="left:237px;top:328.0px;width:522px;height:1px;background:#5a5a5a"></div>
<div class="a" style="left:237px;top:347.0px;width:522px;height:1px;background:#5a5a5a"></div>
<div class="a" style="left:237px;top:356.8px;width:522px;height:1px;background:#5a5a5a"></div>
<div class="a" style="left:237px;top:385.7px;width:522px;height:1px;background:#5a5a5a"></div>
<div class="a" style="left:759px;top:39px;width:9px;height:390px;background:#fbfbfb;border-left:1px solid #eeeeee"></div>
<div class="a" style="left:761px;top:47.5px;width:4.5px;height:364px;background:#6e6e6e;border-radius:2px"></div>
<div class="a" style="left:760.5px;top:41px;width:0;height:0;border-left:2.5px solid transparent;border-right:2.5px solid transparent;border-bottom:3px solid #555"></div>
<div class="a" style="left:760.5px;top:424px;width:0;height:0;border-left:2.5px solid transparent;border-right:2.5px solid transparent;border-top:3px solid #555"></div>
<div class="a" style="left:0;top:429px;width:768px;height:16.5px;background:#e7e7e9"></div>
<svg class="a" style="left:12px;top:433.5px" width="5" height="7" viewBox="0 0 5 7"><path d="M4 0.8 L1.2 3.5 L4 6.2" fill="none" stroke="#6f6f6f" stroke-width="1"/></svg>
<svg class="a" style="left:28px;top:433.5px" width="5" height="7" viewBox="0 0 5 7"><path d="M1 0.8 L3.8 3.5 L1 6.2" fill="none" stroke="#6f6f6f" stroke-width="1"/></svg>
<div class="a" style="left:43px;top:436.2px;width:6px;height:1.4px;background:#555"></div>
<div class="a t" style="left:61px;top:430.8px;width:24.6px;overflow:hidden;font-size:6.7px;line-height:14px;color:#444">BS 2044</div>
<div class="a t" style="left:100.8px;top:430.8px;width:82.2px;overflow:hidden;font-size:6.7px;line-height:14px;color:#444">Statements Summary 2044</div>
<div class="a" style="left:193.5px;top:431.3px;width:46.8px;height:12.2px;background:#f5f38f"></div>
<div class="a t" style="left:193.5px;top:430.8px;width:46.8px;height:14px;text-align:center;font-size:6.7px;line-height:14px;color:#333;">CAPEX 2044</div>
<div class="a t" style="left:248.7px;top:430.8px;width:68.3px;overflow:hidden;font-size:6.7px;line-height:14px;color:#444">Sales Summary Charts</div>
<div class="a t" style="left:331px;top:430.8px;width:57.9px;overflow:hidden;font-size:6.7px;line-height:14px;color:#444">Key Metrics Charts</div>
<div class="a t" style="left:402px;top:430.8px;width:20.0px;overflow:hidden;font-size:6.7px;line-height:14px;color:#444">Charts</div>
<div class="a" style="left:430.5px;top:428.5px;width:21px;height:16.5px;background:#fff"></div>
<div class="a t" style="left:430px;top:429.8px;width:23.0px;height:14px;text-align:center;font-size:6.7px;line-height:14px;color:#333;font-weight:bold;">BEA</div>
<div class="a" style="left:455.9px;top:431.3px;width:36.6px;height:12.2px;background:#f5f38f"></div>
<div class="a t" style="left:455.9px;top:430.8px;width:36.6px;height:14px;text-align:center;font-size:6.7px;line-height:14px;color:#333;">Expenses</div>
<div class="a" style="left:497.4px;top:431.3px;width:68.0px;height:12.2px;background:#f5f38f"></div>
<div class="a t" style="left:497.4px;top:430.8px;width:68.0px;height:14px;text-align:center;font-size:6.7px;line-height:14px;color:#333;">COGS Assumptions</div>
<div class="a" style="left:570.7px;top:431.3px;width:74.0px;height:12.2px;background:#f5f38f"></div>
<div class="a t" style="left:570.7px;top:430.8px;width:74.0px;height:14px;text-align:center;font-size:6.7px;line-height:14px;color:#333;">Salaries Assumptions</div>
<div class="a t" style="left:654.3px;top:430.8px;width:21.2px;overflow:hidden;font-size:6.7px;line-height:14px;color:#444">Chart D</div>
<div class="a" style="left:435.5px;top:441.2px;width:12px;height:1px;background:#2e7f6a"></div>
<div class="a" style="left:680.5px;top:436px;width:1.3px;height:1.3px;background:#555"></div>
<div class="a" style="left:682.5px;top:436px;width:1.3px;height:1.3px;background:#555"></div>
<div class="a" style="left:684.5px;top:436px;width:1.3px;height:1.3px;background:#555"></div>
<div class="a" style="left:696.5px;top:436.5px;width:6px;height:1px;background:#555"></div><div class="a" style="left:699px;top:434px;width:1px;height:6px;background:#555"></div>
<div class="a" style="left:715px;top:433.5px;width:1px;height:1px;background:#666"></div>
<div class="a" style="left:715px;top:435.8px;width:1px;height:1px;background:#666"></div>
<div class="a" style="left:715px;top:438.1px;width:1px;height:1px;background:#666"></div>
<div class="a" style="left:726.5px;top:434.5px;width:0;height:0;border-top:2.5px solid transparent;border-bottom:2.5px solid transparent;border-right:3px solid #666"></div>
<div class="a" style="left:732.4px;top:435px;width:7.6px;height:4px;background:#6a6a6a;border-radius:2px"></div>
<div class="a" style="left:753px;top:434.5px;width:0;height:0;border-top:2.5px solid transparent;border-bottom:2.5px solid transparent;border-left:3px solid #666"></div>
<div class="a" style="left:0;top:445.5px;width:768px;height:9px;background:#f4f4f4"></div>
<div class="a" style="left:6px;top:446.8px;font-size:5.3px;line-height:8px;color:#555">Ready</div>
<div class="a" style="left:30px;top:447.5px;width:6.7px;height:6.5px;background:#a9a9a9;border:1px solid #777"></div>
<div class="a" style="left:45px;top:446px;font-size:6px;line-height:8px;color:#444">&#9878;</div>
<div class="a" style="left:55px;top:446.8px;font-size:5.09px;line-height:8px;color:#333;font-weight:bold">Accessibility: Investigate</div>
<div class="a" style="left:682px;top:449px;width:4px;height:1px;background:#666"></div>
<div class="a" style="left:688px;top:449.5px;width:50px;height:1px;background:#999"></div>
<div class="a" style="left:713px;top:446.5px;width:1.5px;height:6px;background:#444"></div>
<div class="a" style="left:741px;top:449px;width:4px;height:1px;background:#666"></div><div class="a" style="left:742.5px;top:447.5px;width:1px;height:4px;background:#666"></div>
<div class="a" style="left:751px;top:446px;font-size:5.3px;line-height:8px;color:#555">100%</div>
<svg class="a" style="left:626px;top:446px" width="8" height="8" viewBox="0 0 8 8"><rect x="0.5" y="0.5" width="7" height="7" fill="none" stroke="#555" stroke-width="1"/><path d="M0 2.8 H8 M0 5.2 H8 M2.8 0 V8 M5.2 0 V8" stroke="#555" stroke-width="0.8"/></svg>
<div class="a" style="left:646.5px;top:446px;width:7px;height:8px;background:#6a6a6a"></div>
<svg class="a" style="left:666px;top:446px" width="8" height="8" viewBox="0 0 8 8"><rect x="0.5" y="0.5" width="7" height="7" fill="none" stroke="#555" stroke-width="1"/><path d="M4 0.5 V4.5 H0.5" fill="none" stroke="#555" stroke-width="0.8"/></svg>
</div></body></html>
